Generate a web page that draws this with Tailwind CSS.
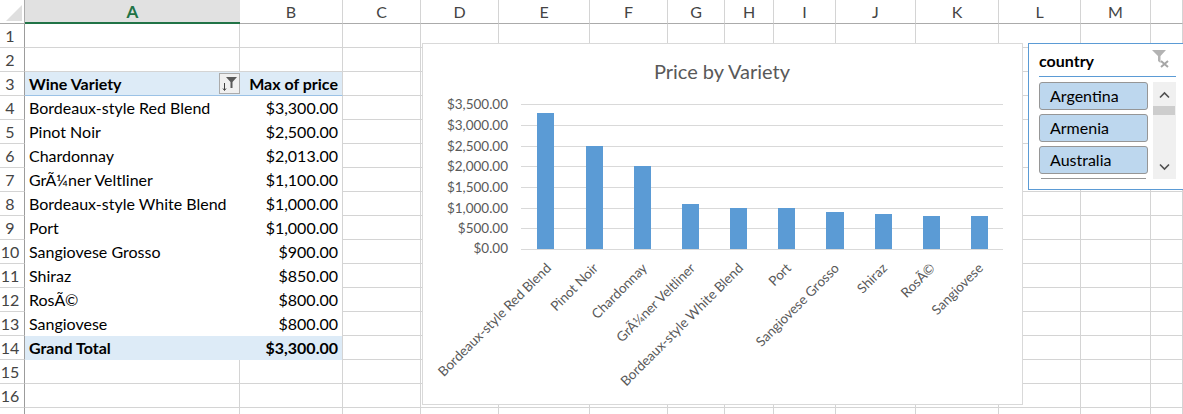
<!DOCTYPE html>
<html lang="en">

<head>
    <meta charset="UTF-8" />
    <title>Price by Variety</title>
    <script src="https://cdn.jsdelivr.net/npm/@tailwindcss/browser@4"></script>
</head>

<body class="bg-white overflow-hidden font-['Lato','Open_Sans',sans-serif] text-[16px] text-black">
    <div class="relative w-[1183px] h-[414px] overflow-hidden">
        <!-- Sheet grid -->
        <div id="sheet" class="grid grid-cols-[25px_215px_103px_78px_78px_91px_78px_57px_49px_62px_80px_83px_82px_70px_32px] grid-rows-[24px_repeat(16,24px)_24px] leading-none"></div>

        <!-- Chart -->
        <div class="absolute left-[422px] top-[43px] w-[601px] h-[362px] bg-white border border-[#d9d9d9]">
            <p class="text-center text-[20px] leading-none mt-[17px] text-[#595959] pr-[1px]">Price by Variety</p>
            <svg class="absolute left-0 top-0" width="599" height="360" viewBox="423 44 599 360" font-family="Lato, sans-serif">
                <g stroke="#d9d9d9" stroke-width="1">
                    <path d="M521 104.5H1003M521 125.5H1003M521 146.5H1003M521 166.5H1003M521 187.5H1003M521 208.5H1003M521 228.5H1003M521 249.5H1003" />
                </g>
                <g fill="#5b9bd5">
                    <rect x="537" y="113" width="17" height="136" />
                    <rect x="586" y="146" width="17" height="103" />
                    <rect x="634" y="166" width="17" height="83" />
                    <rect x="682" y="204" width="17" height="45" />
                    <rect x="730" y="208" width="17" height="41" />
                    <rect x="778" y="208" width="17" height="41" />
                    <rect x="826" y="212" width="18" height="37" />
                    <rect x="875" y="214" width="17" height="35" />
                    <rect x="923" y="216" width="17" height="33" />
                    <rect x="971" y="216" width="17" height="33" />
                </g>
                <g fill="#595959" font-size="13.5" text-anchor="end">
                    <text x="508" y="109">$3,500.00</text>
                    <text x="508" y="130">$3,000.00</text>
                    <text x="508" y="151">$2,500.00</text>
                    <text x="508" y="171">$2,000.00</text>
                    <text x="508" y="192">$1,500.00</text>
                    <text x="508" y="213">$1,000.00</text>
                    <text x="508" y="233">$500.00</text>
                    <text x="508" y="253">$0.00</text>
                </g>
                <g fill="#595959" font-size="13.5" text-anchor="end">
                    <text transform="translate(552 269) rotate(-45)">Bordeaux-style Red Blend</text>
                    <text transform="translate(599 269) rotate(-45)">Pinot Noir</text>
                    <text transform="translate(648 269) rotate(-45)">Chardonnay</text>
                    <text transform="translate(696 269) rotate(-45)">GrÃ¼ner Veltliner</text>
                    <text transform="translate(744 269) rotate(-45)">Bordeaux-style White Blend</text>
                    <text transform="translate(792 269) rotate(-45)">Port</text>
                    <text transform="translate(840 269) rotate(-45)">Sangiovese Grosso</text>
                    <text transform="translate(888 269) rotate(-45)">Shiraz</text>
                    <text transform="translate(936 269) rotate(-45)">RosÃ©</text>
                    <text transform="translate(984 269) rotate(-45)">Sangiovese</text>
                </g>
            </svg>
        </div>

        <!-- Slicer -->
        <div class="absolute left-[1028px] top-[43px] w-[170px] h-[147px] bg-white border border-[#5b9bd5] pl-[10px] pt-[6px]">
            <div class="relative w-[137px] h-[27px] border-b border-[#5b9bd5] font-bold text-[16px] leading-[22px]">
                country
                <svg class="absolute left-[112px] top-[-1px]" width="20" height="20" viewBox="0 0 20 20">
                    <path d="M1 1H15L9.5 7V14L7 12V7Z" fill="#b3b3b3" />
                    <path d="M10 12L17 18M17 12L10 18" stroke="#a6a6a6" stroke-width="2" fill="none" />
                </svg>
            </div>
            <div class="flex mt-[5px]">
                <div class="w-[109px] flex flex-col gap-[4px]">
                    <div class="h-[28px] rounded-[3px] bg-[#bdd7ee] border border-[#969696] pl-[10px] leading-[26px]">Argentina</div>
                    <div class="h-[28px] rounded-[3px] bg-[#bdd7ee] border border-[#969696] pl-[10px] leading-[26px]">Armenia</div>
                    <div class="h-[28px] rounded-[3px] bg-[#bdd7ee] border border-[#969696] pl-[10px] leading-[26px]">Australia</div>
                    <div class="h-px mx-[2px] bg-[#969696]"></div>
                </div>
                <div class="relative ml-[5px] w-[23px] h-[97px] bg-[#f0f0f0]">
                    <svg class="absolute left-[6px] top-[9px]" width="11" height="8" viewBox="0 0 11 8">
                        <path d="M1 6.5L5.5 2L10 6.5" stroke="#505050" stroke-width="1.6" fill="none" />
                    </svg>
                    <div class="absolute left-0 top-[24px] w-[22px] h-[9px] bg-[#cdcdcd]"></div>
                    <svg class="absolute left-[6px] top-[81px]" width="11" height="8" viewBox="0 0 11 8">
                        <path d="M1 1.5L5.5 6L10 1.5" stroke="#505050" stroke-width="1.6" fill="none" />
                    </svg>
                </div>
            </div>
        </div>
    </div>

    <script>
        const columns = ['A', 'B', 'C', 'D', 'E', 'F', 'G', 'H', 'I', 'J', 'K', 'L', 'M', ''];
        const pivot = [
            ['Bordeaux-style Red Blend', '$3,300.00'],
            ['Pinot Noir', '$2,500.00'],
            ['Chardonnay', '$2,013.00'],
            ['GrÃ¼ner Veltliner', '$1,100.00'],
            ['Bordeaux-style White Blend', '$1,000.00'],
            ['Port', '$1,000.00'],
            ['Sangiovese Grosso', '$900.00'],
            ['Shiraz', '$850.00'],
            ['RosÃ©', '$800.00'],
            ['Sangiovese', '$800.00'],
        ];

        const filterButton = `<span class="absolute left-[-21px] top-[1px] w-[21px] h-[21px] border border-[#ababab] bg-[#f0f0f0]">
            <svg width="19" height="19" viewBox="0 0 19 19" class="block">
                <path d="M6 3H17L12.5 8V14H10.5V8Z" fill="#595959" />
                <path d="M4.5 9V16M3 14.5L4.5 16.5L6 14.5" stroke="#404040" fill="none" />
            </svg>
        </span>`;

        let html = '<div class="border-b border-r border-[#ababab] bg-white relative overflow-hidden"><span class="absolute right-[2px] bottom-[2px] w-0 h-0 border-l-[16px] border-l-transparent border-b-[16px] border-b-[#dfdfdf]"></span></div>';
        columns.forEach(col => {
            if (col === 'A') {
                html += '<div class="flex items-center justify-center bg-[#e1e1e1] border-b-2 border-[#217346] text-[#217346] font-bold text-[17px]">A</div>';
            } else {
                html += `<div class="flex items-center justify-center border-b border-b-[#ababab] border-r border-r-[#d4d4d4] text-[#444444] text-[16px]">${col}</div>`;
            }
        });

        for (let row = 1; row <= 17; row++) {
            html += `<div class="flex items-center justify-center pr-[4px] border-b border-b-[#d4d4d4] border-r border-r-[#9c9c9c] text-[#444444]">${row <= 16 ? row : ''}</div>`;
            columns.forEach((col, i) => {
                let cls = 'border-b border-b-[#d4d4d4] border-r border-r-[#d4d4d4]';
                let text = '';
                if (row === 3 && i < 2) {
                    cls = 'bg-[#ddebf7] border-b border-b-[#9bc2e6] font-bold';
                    if (i === 1) cls += ' border-r border-r-[#d4d4d4]';
                    text = i === 0 ? 'Wine Variety' : 'Max of price';
                } else if (row === 14 && i < 2) {
                    cls = 'bg-[#ddebf7] font-bold';
                    if (i === 1) cls += ' border-r border-r-[#d4d4d4]';
                    text = i === 0 ? 'Grand Total' : '$3,300.00';
                } else if (row >= 4 && row <= 13 && i < 2) {
                    cls = i === 1 ? 'border-r border-r-[#d4d4d4]' : '';
                    text = pivot[row - 4][i];
                }
                const align = i === 1 ? 'justify-end pr-[4px]' : 'pl-[4px]';
                const extra = row === 3 && i === 1 ? filterButton : '';
                html += `<div class="relative flex items-center whitespace-nowrap ${align} ${cls}">${extra}${text}</div>`;
            });
        }
        document.getElementById('sheet').innerHTML = html;
    </script>
</body>

</html>
